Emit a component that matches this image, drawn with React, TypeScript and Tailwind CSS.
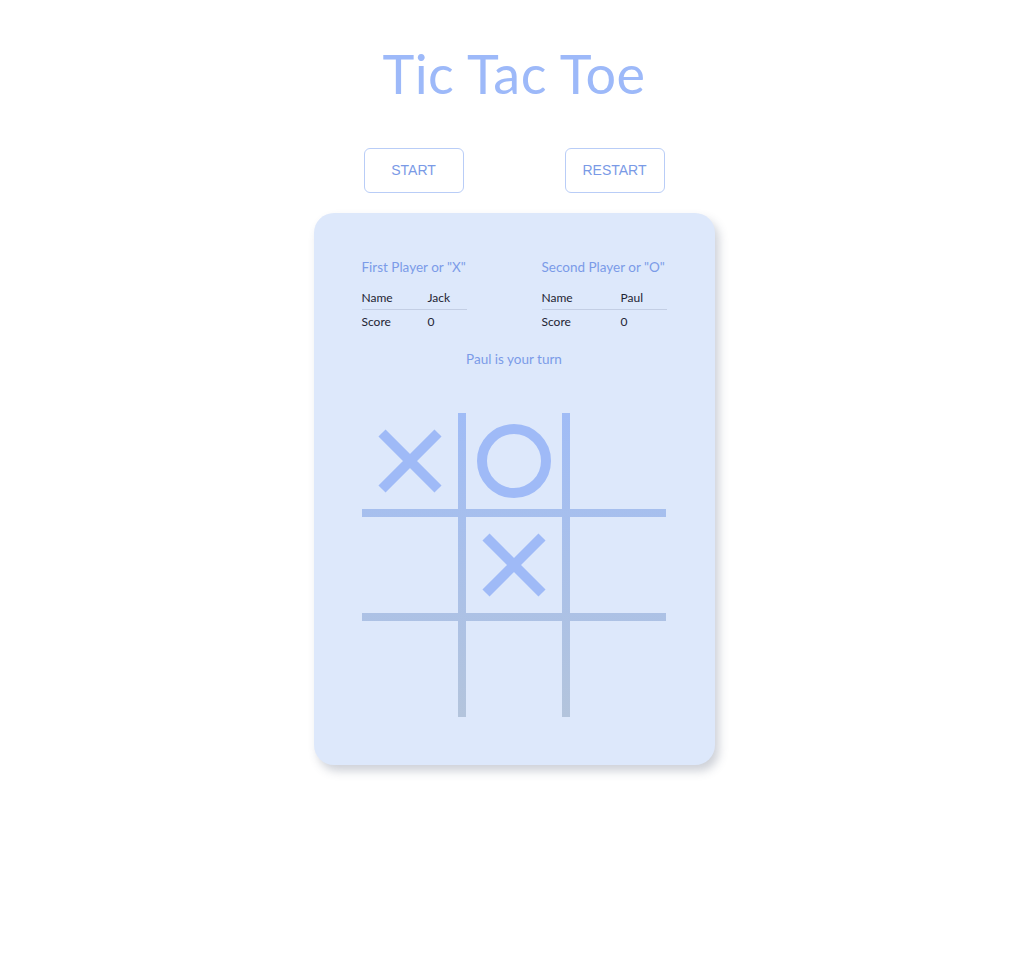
const FONT = "font-['Lato','Noto_Sans',sans-serif]";

type Mark = 'X' | 'O' | null;

const board: Mark[] = ['X', 'O', null, null, 'X', null, null, null, null];

function XMark() {
  return (
    <svg width="66" height="66" viewBox="0 0 66 66">
      <path d="M5 5 L61 61 M61 5 L5 61" stroke="#9fbaf7" strokeWidth="10" strokeLinecap="butt" />
    </svg>
  );
}

function OMark() {
  return (
    <svg width="76" height="76" viewBox="0 0 76 76">
      <circle cx="38" cy="38" r="32" fill="none" stroke="#9fbaf7" strokeWidth="10" />
    </svg>
  );
}

function PlayerTable({ title, name, score, w1, w2 }: { title: string; name: string; score: number; w1: string; w2: string }) {
  return (
    <div>
      <h3 className="text-[13.5px] text-[#7b9be8] leading-none mb-[14px]">{title}</h3>
      <table className="text-[12px] text-[#1e2433] border-collapse">
        <tbody>
          <tr className="border-b border-[#c3cee4]">
            <td className={`${w1} h-[20px] align-middle pb-[2px]`}>Name</td>
            <td className={`${w2} h-[20px] align-middle pb-[2px]`}>{name}</td>
          </tr>
          <tr>
            <td className="h-[25px] align-middle">Score</td>
            <td className="h-[25px] align-middle">{score}</td>
          </tr>
        </tbody>
      </table>
    </div>
  );
}

export default function App() {
  return (
    <div className={`min-h-[964px] bg-white flex flex-col items-center ${FONT}`}>
      <h1 className="mt-[42px] text-[54px] leading-[64px] font-normal text-[#9db9f9] tracking-[0.5px]">Tic Tac Toe</h1>

      <div className="mt-[42px] flex gap-[101px]">
        <button className="w-[100px] h-[45px] rounded-md border border-[#b9cdf7] bg-white text-[14px] text-[#7a9ae6] font-['Liberation_Sans',Arial,sans-serif]">
          START
        </button>
        <button className="w-[100px] h-[45px] rounded-md border border-[#b9cdf7] bg-white text-[14px] text-[#7a9ae6] font-['Liberation_Sans',Arial,sans-serif]">
          RESTART
        </button>
      </div>

      <div className="mt-[20px] w-[401px] h-[552px] rounded-[20px] bg-[#dde8fb] shadow-[4px_6px_10px_rgba(60,70,100,0.25)] px-[48px] pt-[48px] pb-[48px] flex flex-col">
        <div className="flex justify-between">
          <PlayerTable title={'First Player or "X"'} name="Jack" score={0} w1="w-[66px]" w2="w-[39px]" />
          <PlayerTable title={'Second Player or "O"'} name="Paul" score={0} w1="w-[79px]" w2="w-[46px]" />
        </div>

        <p className="mt-[19px] text-center text-[13.5px] text-[#7b9be8] leading-none">Paul is your turn</p>

        <div className="mt-[46px] w-[304px] h-[304px] grid grid-cols-[96px_96px_96px] grid-rows-[96px_96px_96px] gap-[8px] bg-gradient-to-b from-[#a0bcf6] to-[#b3c4dc]">
          {board.map((m, i) => (
            <div key={i} className="bg-[#dde8fb] flex items-center justify-center">
              {m === 'X' && <XMark />}
              {m === 'O' && <OMark />}
            </div>
          ))}
        </div>
      </div>
    </div>
  );
}
